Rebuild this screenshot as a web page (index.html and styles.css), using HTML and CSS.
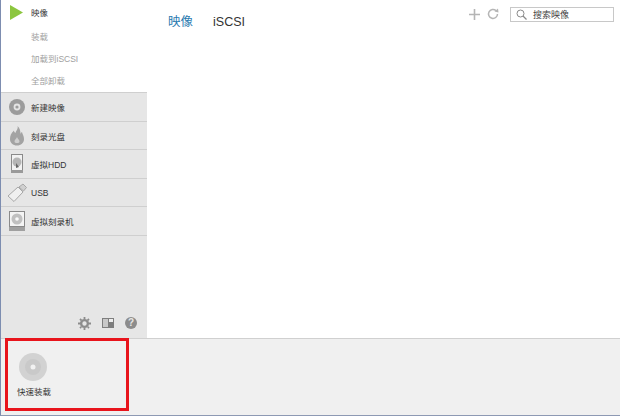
FILE: index.html
```html
<!DOCTYPE html>
<html>
<head>
    <title>映像</title>
    <link rel="stylesheet" href="styles.css">
</head>
<body>
    <div class="main">
        <div class="sidebar">
            <div class="menu">
                <div class="menu-head">
                    <svg class="play" width="14" height="15" viewBox="0 0 14 15"><path d="M0 0L13 7.5L0 15z" fill="#8cc63f"/></svg>
                    <span>映像</span>
                </div>
                <div class="menu-item">装载</div>
                <div class="menu-item">加载到iSCSI</div>
                <div class="menu-item">全部卸载</div>
            </div>
            <div class="row">
                <svg width="18" height="18" viewBox="0 0 18 18"><circle cx="9" cy="9" r="8" fill="#9c9c9c"/><circle cx="9" cy="9" r="3.4" fill="#e4e4e4"/><circle cx="9" cy="9" r="1.6" fill="#9c9c9c"/></svg>
                <span>新建映像</span>
            </div>
            <div class="row">
                <svg width="18" height="20" viewBox="0 0 18 20"><path d="M9.500 0C10.500 3 8 4.500 7.500 7C6.500 6.500 6 5.500 6 4.500C3 7 2 10 2 13C2 17 5 19.500 9 19.500C13 19.500 16 17 16 13C16 10 14.500 8.500 14 6C13 6.500 12.500 7.500 12.500 8.500C12.500 5 12 2 9.500 0z" fill="#a3a3a3"/><path d="M9 11C8.500 13 6.500 13.500 6.500 15.500C6.500 17.500 11.500 17.500 11.500 15.500C11.500 13.500 9.500 13 9 11z" fill="#cfcfcf"/></svg>
                <span>刻录光盘</span>
            </div>
            <div class="row">
                <svg width="18" height="20" viewBox="0 0 18 20"><rect x="3.500" y="0.500" width="11" height="16" fill="#f2f2f2" stroke="#8a8a8a"/><rect x="3" y="16" width="12" height="3" fill="#9a9a9a"/><circle cx="9" cy="8" r="4.500" fill="#b5b5b5"/><path d="M8 9L11 13L8 14z" fill="#666"/></svg>
                <span>虚拟HDD</span>
            </div>
            <div class="row">
                <svg width="20" height="20" viewBox="0 0 20 20"><path d="M1 13L11 4L16 9L7 18.500z" fill="#f0f0f0" stroke="#a8a8a8"/><path d="M12 4L16 1L19.500 4.500L16.500 8z" fill="#d0d0d0" stroke="#a8a8a8"/></svg>
                <span>USB</span>
            </div>
            <div class="row">
                <svg width="18" height="20" viewBox="0 0 18 20"><rect x="1.500" y="0.500" width="15" height="15" fill="#f4f4f4" stroke="#8a8a8a"/><rect x="1" y="16" width="16" height="4" fill="#a0a0a0"/><circle cx="9" cy="8" r="5.500" fill="#c0c0c0"/><circle cx="9" cy="8" r="1.800" fill="#fafafa"/></svg>
                <span>虚拟刻录机</span>
            </div>
            <div class="tools">
                <svg width="13" height="13" viewBox="0 0 13 13"><circle cx="6.500" cy="6.500" r="3.400" fill="none" stroke="#8c8c8c" stroke-width="2.400"/><path d="M6.500 0V13M0 6.500H13M2 2L11 11M11 2L2 11" stroke="#8c8c8c" stroke-width="1.800" stroke-dasharray="2 9"/></svg>
                <svg width="12" height="10" viewBox="0 0 12 10"><rect width="12" height="10" fill="#7e7e7e"/><rect x="1" y="1" width="5" height="8" fill="#c8c8c8"/><rect x="7" y="1" width="4" height="3" fill="#eeeeee"/></svg>
                <div class="help">?</div>
            </div>
        </div>
        <div class="content">
            <div class="topbar">
                <div class="tab tab-active">映像</div>
                <div class="tab">iSCSI</div>
                <div class="actions">
                    <svg width="11" height="11" viewBox="0 0 11 11"><path d="M5.500 0V11M0 5.500H11" stroke="#b5b5b5" stroke-width="1.600"/></svg>
                    <svg width="12" height="12" viewBox="0 0 12 12"><path d="M10.500 6A4.500 4.500 0 1 1 9 2.600" fill="none" stroke="#b5b5b5" stroke-width="1.500"/><path d="M7.500 3.500L11.500 4.500L11 0.500z" fill="#b5b5b5"/></svg>
                    <div class="search">
                        <svg width="11" height="11" viewBox="0 0 11 11"><circle cx="4.500" cy="4.500" r="3.500" fill="none" stroke="#8a8a8a"/><path d="M7 7L10.500 10.500" stroke="#8a8a8a" stroke-width="1.200"/></svg>
                        <span>搜索映像</span>
                    </div>
                </div>
            </div>
        </div>
    </div>
    <div class="footer">
        <div class="quick">
            <svg width="28" height="28" viewBox="0 0 28 28"><circle cx="14" cy="14" r="14" fill="#d2d2d2"/><circle cx="14" cy="14" r="8" fill="#c9c9c9"/><circle cx="14" cy="14" r="2.500" fill="#f2f2f2"/></svg>
            <span>快速装载</span>
        </div>
    </div>
</body>
</html>
```

FILE: styles.css
```css
body {
    margin: 0;
    height: 416px;
    overflow: hidden;
    display: flex;
    flex-direction: column;
    box-sizing: border-box;
    border-left: 1px solid #7d8db0;
    border-bottom: 1px solid #8d99b3;
    font-family: "Liberation Sans", "Noto Sans CJK SC", sans-serif;
    font-size: 8.5px;
    color: #333;
    background-color: #fff;
}

.main {
    display: flex;
    height: 338px;
}

.sidebar {
    width: 146px;
    display: flex;
    flex-direction: column;
    background-color: #e6e6e6;
}

.menu {
    height: 93px;
    box-sizing: border-box;
    padding-bottom: 1px;
    background-color: #fff;
    border-bottom: 1px solid #cfcfcf;
}

.menu-head {
    display: flex;
    align-items: center;
    height: 24px;
    margin-bottom: 2px;
    padding-left: 9px;
    gap: 7px;
}

.menu-item {
    height: 22px;
    line-height: 22px;
    padding-left: 30px;
    color: #a0a0a0;
}

.row {
    display: flex;
    align-items: center;
    height: 28.5px;
    box-sizing: border-box;
    padding: 1px 0 0 6px;
    border-bottom: 1px solid #cfcfcf;
}

.row svg {
    width: 20px;
    margin-right: 4px;
}

.tools {
    margin-top: auto;
    height: 30px;
    display: flex;
    align-items: center;
    justify-content: flex-end;
    gap: 11px;
    padding-right: 10px;
}

.help {
    width: 12px;
    height: 12px;
    border-radius: 50%;
    background-color: #8c8c8c;
    color: #e6e6e6;
    font-size: 10px;
    font-weight: bold;
    line-height: 12px;
    text-align: center;
}

.content {
    flex: 1;
}

.topbar {
    display: flex;
    align-items: flex-start;
    height: 40px;
    padding: 3px 6px 0 21px;
    box-sizing: border-box;
}

.tab {
    font-size: 12.5px;
    line-height: 38px;
    margin-right: 20px;
}

.tab-active {
    color: #2a7ab0;
}

.actions {
    margin-left: auto;
    display: flex;
    align-items: center;
    height: 22px;
    gap: 7px;
}

.search {
    width: 104px;
    height: 15px;
    margin-left: 4px;
    box-sizing: border-box;
    border: 1px solid #c8c8c8;
    display: flex;
    align-items: center;
    gap: 6px;
    padding-left: 5px;
    font-size: 9px;
    color: #444;
}

.footer {
    flex: 1;
    background-color: #f0f0f0;
    border-top: 1px solid #d0d0d0;
    position: relative;
}

.quick {
    position: absolute;
    left: 4px;
    top: -1px;
    width: 109px;
    height: 55px;
    border: 3px solid #e8141c;
    display: flex;
    flex-direction: column;
    gap: 4px;
    padding: 12px 0 0 9px;
}

.quick svg {
    margin-left: 2px;
}
```
